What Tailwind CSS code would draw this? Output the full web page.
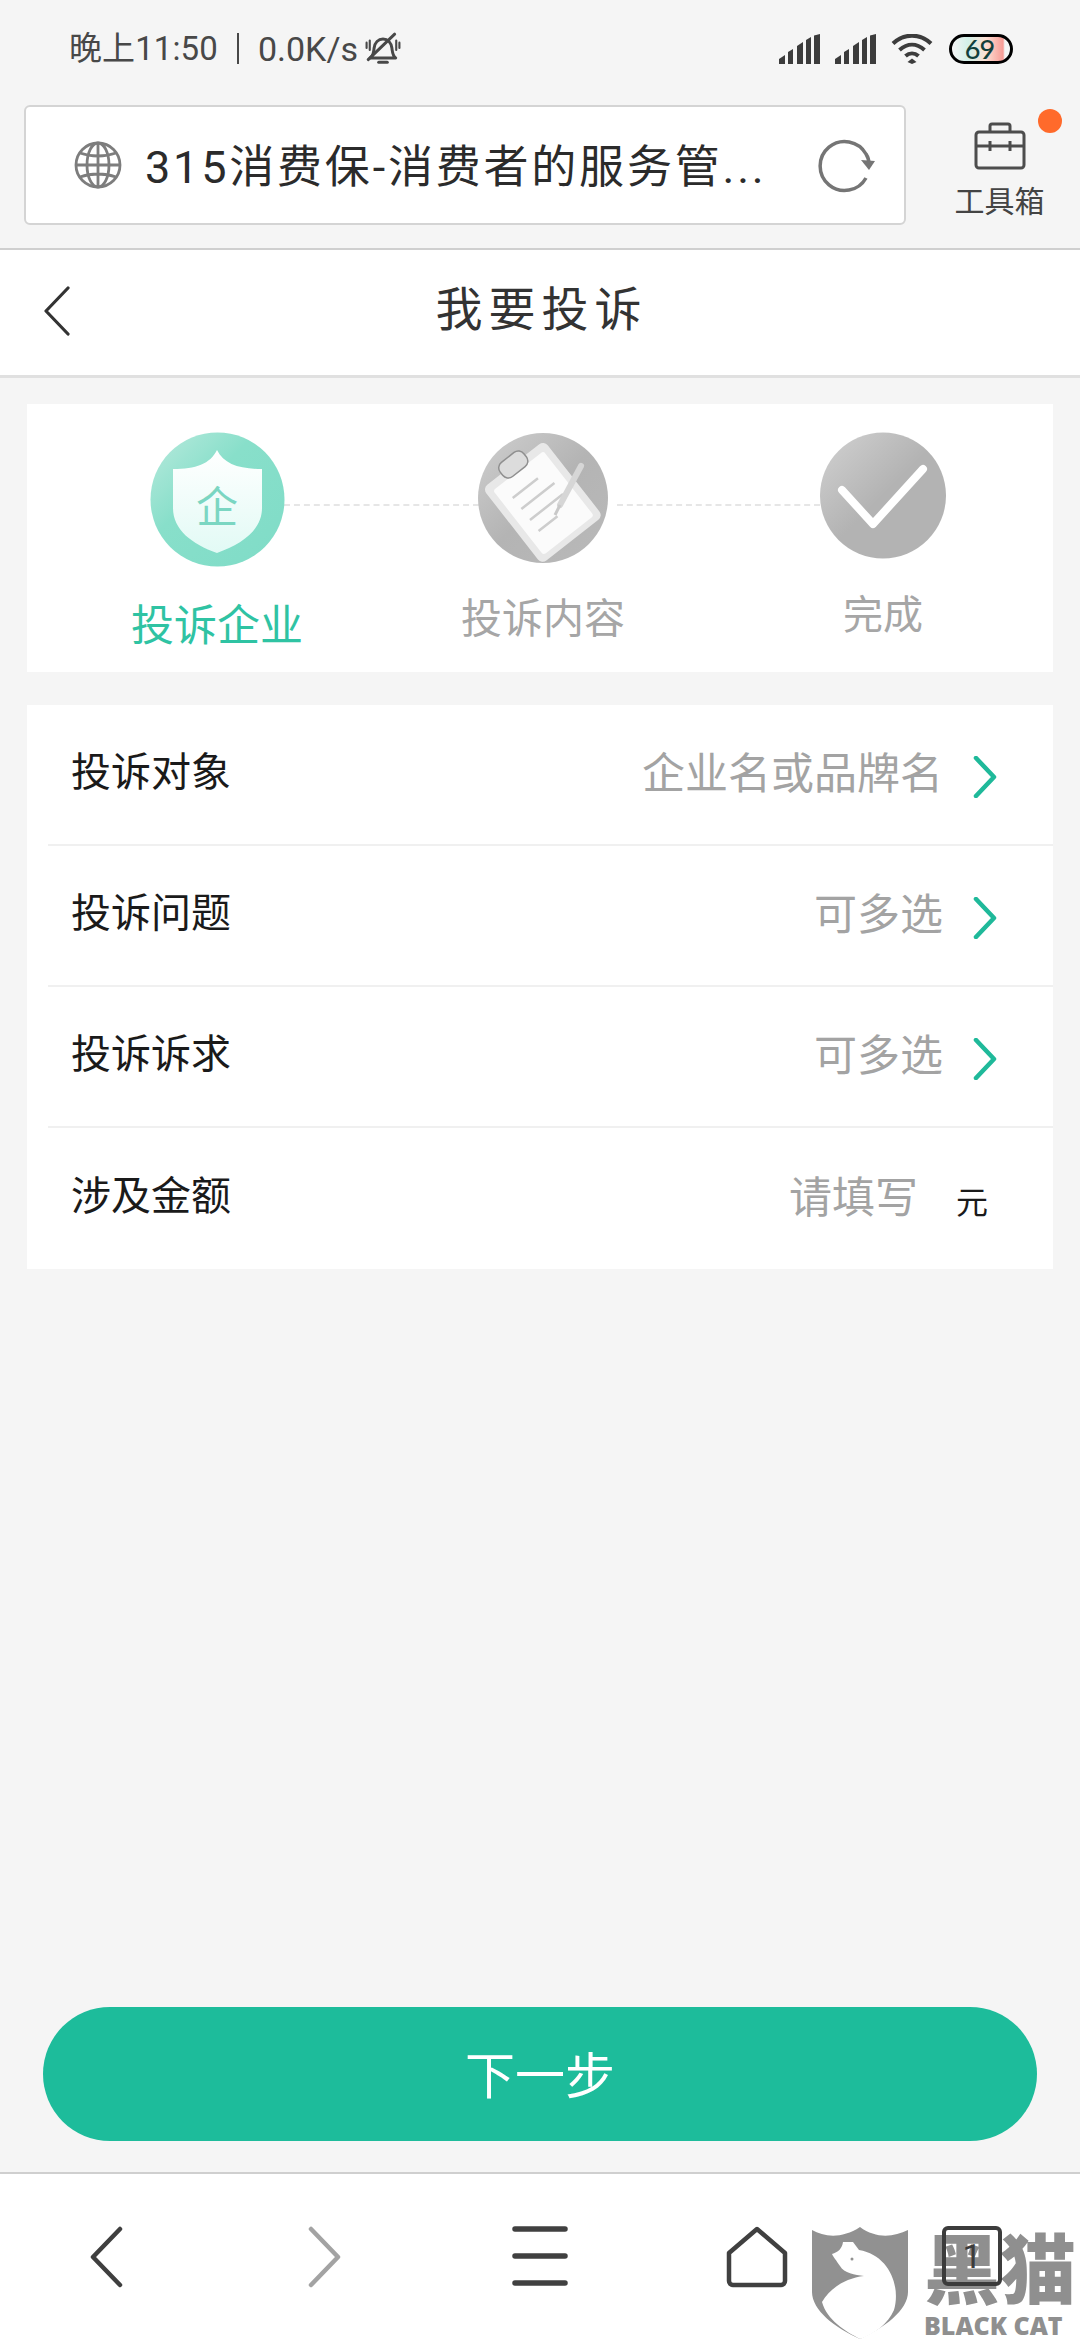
<!DOCTYPE html>
<html lang="zh-CN">
<head>
<meta charset="utf-8">
<script src="https://cdn.jsdelivr.net/npm/@tailwindcss/browser@4"></script>
<title>我要投诉</title>
</head>
<body class="m-0">
<div class="relative w-[1080px] h-[2340px] overflow-hidden flex flex-col bg-[#f5f5f5] font-['Roboto','Noto_Sans_CJK_SC',sans-serif] text-[#333]">

  <!-- status bar -->
  <div class="h-[105px] shrink-0 flex items-center justify-between pl-[69px] pr-[67px] pb-[8px]">
    <div class="flex items-center text-[#484848]">
      <span class="text-[33px] leading-[40px] tracking-[0.1px]">晚上11:50</span>
      <span class="w-[2px] h-[31px] bg-[#484848] ml-[19px]"></span>
      <span class="text-[34px] leading-[40px] ml-[19px] tracking-[0px]">0.0K/s</span>
      <svg class="ml-[7px]" width="36" height="34" viewBox="0 0 34 32" fill="none" stroke="#484848" stroke-width="2.800" stroke-linecap="round" stroke-linejoin="round">
        <path d="M5 24.500c3-2 3-5 3.600-9.500C9.300 10 12.500 6.500 17 6.500s7.700 3.500 8.400 8.500c.6 4.500.6 7.500 3.600 9.500z"/>
        <path d="M13 28.500h8" stroke-width="3"/>
        <path d="M3 26 28 2"/>
        <path d="M1.500 10v5M4.500 8v9M29.500 8v9M32.500 10v5" stroke-width="2"/>
      </svg>
    </div>
    <div class="flex items-center">
      <svg width="41" height="30" viewBox="0 0 41 30" fill="#3c3c3c"><path d="M0 30v-5l6-4v9zM9 30V18l5-3v15zM18 30V12l6-4v22zM27 30V6l5-3v27zM35 30V1.500l6-1.500v30z"/></svg>
      <svg class="ml-[15px]" width="41" height="30" viewBox="0 0 41 30" fill="#3c3c3c"><path d="M0 30v-5l6-4v9zM9 30V18l5-3v15zM18 30V12l6-4v22zM27 30V6l5-3v27zM35 30V1.500l6-1.500v30z"/></svg>
      <svg class="ml-[15px]" width="42" height="30" viewBox="0 0 42 30" fill="none" stroke="#3c3c3c" stroke-width="4"><path d="M2 9.500C13-1 29-1 40 9.500"/><path d="M8.500 16c8-7 17-7 25 0"/><path d="M14.500 22c4-3.500 9-3.500 13 0"/><path d="m21 24.500 4.500 3.500-4.500 2-4.500-2z" fill="#3c3c3c" stroke="none"/></svg>
      <div class="ml-[16px] relative w-[64px] h-[30px] rounded-full border-[3px] border-black bg-[linear-gradient(90deg,#f5f5f5_0%,#d2f0e8_28%,#fde0d4_58%,#f79c96_88%,#f5f5f5_91%)] flex items-center justify-center">
        <span class="text-[27px] leading-[24px] tracking-[-1px] font-medium text-[#123f3c] pr-[3px] font-['Lato',sans-serif]">69</span>
      </div>
    </div>
  </div>

  <!-- address row -->
  <div class="h-[143px] shrink-0 flex items-start pl-[24px]">
    <div class="w-[882px] h-[120px] shrink-0 bg-white border-2 border-[#d4d4d4] rounded-[6px] flex items-center pl-[48px]">
      <svg width="48" height="48" viewBox="0 0 48 48" fill="none" stroke="#7d7d7d" stroke-width="2.800">
        <circle cx="24" cy="24" r="22"/>
        <ellipse cx="24" cy="24" rx="11" ry="22"/>
        <path d="M24 2v44M2 24h44M6 12c11 4 25 4 36 0M6 36c11-4 25-4 36 0"/>
      </svg>
      <span class="ml-[23px] mt-[5px] text-[45px] leading-[56px] text-[#2b2b2b] tracking-[2.800px] whitespace-nowrap">315消费保-消费者的服务管...</span>
      <svg class="ml-[50px] shrink-0" width="60" height="56" viewBox="0 0 60 56" fill="none" stroke="#757575" stroke-width="3.500">
        <path d="M49 41A24.500 24.500 0 1 1 49 17c2 3 3 7 3 10"/>
        <path d="m44 23 14 1-6 9z" fill="#757575" stroke="none"/>
      </svg>
    </div>
    <div class="relative flex-1 flex flex-col items-center pt-[17px] pl-[13px]">
      <svg width="52" height="48" viewBox="0 0 52 48" fill="none" stroke="#4d4d4d" stroke-width="3">
        <rect x="2" y="10" width="48" height="36" rx="3"/>
        <path d="M16 10V4a2 2 0 0 1 2-2h16a2 2 0 0 1 2 2v6"/>
        <path d="M2 24h48M16 19v10M36 19v10"/>
      </svg>
      <span class="mt-[14px] text-[30px] leading-[36px] text-[#444] whitespace-nowrap">工具箱</span>
      <span class="absolute right-[18px] top-[4px] w-[24px] h-[24px] rounded-full bg-[#ff6a2b]"></span>
    </div>
  </div>

  <!-- title bar -->
  <div class="h-[130px] shrink-0 bg-white border-t-2 border-[#cfcfcf] border-b-[3px] border-b-[#e0e0e0] relative flex items-center justify-center">
    <svg class="absolute left-[43px] top-[36px]" width="28" height="50" viewBox="0 0 28 50" fill="none" stroke="#333" stroke-width="3.200" stroke-linecap="round" stroke-linejoin="round"><path d="M25 2 3 25l22 23"/></svg>
    <span class="text-[47px] leading-[60px] tracking-[6px] text-[#333] pl-[3px] mb-[5px]">我要投诉</span>
  </div>

  <!-- steps -->
  <div class="relative mt-[26px] mx-[27px] h-[268px] shrink-0 bg-white flex items-start">
    <span class="absolute left-[257px] top-[100px] w-[195px] border-t-2 border-dashed border-[#e6e6e6]"></span>
    <span class="absolute left-[590px] top-[100px] w-[203px] border-t-2 border-dashed border-[#e6e6e6]"></span>

    <div class="relative ml-[105px] w-[170px] pt-[28px] flex flex-col items-center">
      <svg width="135" height="135" viewBox="0 0 135 135">
        <defs>
          <linearGradient id="tg" x1="0" y1="0" x2="1" y2="1"><stop offset="0" stop-color="#b9eadd"/><stop offset="0.4" stop-color="#88dfca"/><stop offset="1" stop-color="#7fdcc7"/></linearGradient>
          <linearGradient id="sg" x1="0" y1="0" x2="0" y2="1"><stop offset="0" stop-color="#ffffff"/><stop offset="1" stop-color="#e2faf5"/></linearGradient>
        </defs>
        <circle cx="67.500" cy="67.500" r="67" fill="url(#tg)"/>
        <path d="M67 18c7 14 22 19 45 19v39c0 22-20 36-45 45-25-9-44-23-44-45V37c23 0 37-5 44-19z" fill="url(#sg)"/>
        <text x="67" y="90" text-anchor="middle" font-size="42" fill="#7bd6c2" font-family="Noto Sans CJK SC">企</text>
      </svg>
      <span class="mt-[37px] text-[43px] leading-[44px] text-[#2fc3a3] whitespace-nowrap">投诉企业</span>
    </div>

    <div class="relative ml-[159px] w-[164px] pt-[29px] flex flex-col items-center">
      <svg width="130" height="130" viewBox="0 0 130 130">
        <defs>
          <linearGradient id="gg" x1="0" y1="0" x2="1" y2="1"><stop offset="0" stop-color="#cfcfcf"/><stop offset="0.5" stop-color="#b4b4b4"/><stop offset="1" stop-color="#b9b9b9"/></linearGradient>
        </defs>
        <circle cx="65" cy="65" r="65" fill="url(#gg)"/>
        <g transform="rotate(-38 60 68)">
          <rect x="24" y="24" width="78" height="96" rx="6" fill="#e8e8e8"/>
          <rect x="31" y="32" width="64" height="82" rx="3" fill="#fbfbfb"/>
          <rect x="48" y="15" width="30" height="18" rx="7" fill="#dcdcdc" stroke="#8f8f8f" stroke-width="1.500"/>
          <path d="M42 50h32M42 64h42M42 78h42M42 92h24" stroke="#cdcdcd" stroke-width="2.500"/>
        </g>
        <path d="M103 33 82 72" stroke="#d6d6d6" stroke-width="6" stroke-linecap="round"/>
        <path d="m82 72-5 10" stroke="#c8c8c8" stroke-width="3"/>
      </svg>
      <span class="mt-[34px] text-[41px] leading-[44px] text-[#a6a6a6] whitespace-nowrap">投诉内容</span>
    </div>

    <div class="relative ml-[195px] w-[126px] pt-[28px] flex flex-col items-center">
      <svg width="126" height="127" viewBox="0 0 126 127">
        <defs>
          <linearGradient id="gh" x1="0" y1="0" x2="1" y2="1"><stop offset="0" stop-color="#d2d2d2"/><stop offset="0.5" stop-color="#b3b3b3"/><stop offset="1" stop-color="#b3b3b3"/></linearGradient>
        </defs>
        <circle cx="63" cy="63.500" r="63" fill="url(#gh)"/>
        <path d="M22 58 53 92 103 37" fill="none" stroke="#fff" stroke-width="8" stroke-linecap="round" stroke-linejoin="round"/>
      </svg>
      <span class="mt-[35px] text-[40px] leading-[44px] text-[#a6a6a6] whitespace-nowrap">完成</span>
    </div>
  </div>

  <!-- form -->
  <div class="mt-[33px] mx-[27px] shrink-0 bg-white flex flex-col pl-[21px]">
    <div class="h-[141px] border-b-2 border-[#f0f0f0] flex items-center pl-[23px] pr-[56px]">
      <span class="text-[40px] leading-[50px] text-[#1a1a1a] flex-1 mb-[4px]">投诉对象</span>
      <span class="text-[43px] leading-[50px] text-[#a3a3a3] mb-[1px]">企业名或品牌名</span>
      <svg class="ml-[30px] mt-[4px]" width="24" height="42" viewBox="0 0 24 42" fill="none" stroke="#1fb99a" stroke-width="4.500" stroke-linecap="round" stroke-linejoin="round"><path d="M3 2l18 19L3 40"/></svg>
    </div>
    <div class="h-[141px] border-b-2 border-[#f0f0f0] flex items-center pl-[23px] pr-[56px]">
      <span class="text-[40px] leading-[50px] text-[#1a1a1a] flex-1 mb-[4px]">投诉问题</span>
      <span class="text-[43px] leading-[50px] text-[#a3a3a3] mb-[1px]">可多选</span>
      <svg class="ml-[30px] mt-[4px]" width="24" height="42" viewBox="0 0 24 42" fill="none" stroke="#1fb99a" stroke-width="4.500" stroke-linecap="round" stroke-linejoin="round"><path d="M3 2l18 19L3 40"/></svg>
    </div>
    <div class="h-[141px] border-b-2 border-[#f0f0f0] flex items-center pl-[23px] pr-[56px]">
      <span class="text-[40px] leading-[50px] text-[#1a1a1a] flex-1 mb-[4px]">投诉诉求</span>
      <span class="text-[43px] leading-[50px] text-[#a3a3a3] mb-[1px]">可多选</span>
      <svg class="ml-[30px] mt-[4px]" width="24" height="42" viewBox="0 0 24 42" fill="none" stroke="#1fb99a" stroke-width="4.500" stroke-linecap="round" stroke-linejoin="round"><path d="M3 2l18 19L3 40"/></svg>
    </div>
    <div class="h-[141px] flex items-center pl-[23px] pr-[65px]">
      <span class="text-[40px] leading-[50px] text-[#1a1a1a] flex-1 mb-[4px]">涉及金额</span>
      <span class="text-[43px] leading-[50px] text-[#a3a3a3] mb-[1px]">请填写</span>
      <span class="ml-[38px] mt-[8px] text-[32px] leading-[40px] text-[#1a1a1a]">元</span>
    </div>
  </div>

  <!-- next -->
  <div class="mt-auto mx-[43px] mb-[31px] h-[134px] shrink-0 rounded-full bg-[#1dbc9b] flex items-center justify-center">
    <span class="text-[50px] leading-[60px] text-white mt-[5px]">下一步</span>
  </div>

  <!-- bottom nav -->
  <div class="h-[168px] shrink-0 bg-white border-t-2 border-[#cfcfcf] relative flex items-start pt-[52px] pl-[88px]">
    <svg width="36" height="62" viewBox="0 0 36 62" fill="none" stroke="#3f3f3f" stroke-width="4.500" stroke-linecap="round" stroke-linejoin="round"><path d="M32 3 5 31l27 28"/></svg>
    <svg class="ml-[183px]" width="36" height="62" viewBox="0 0 36 62" fill="none" stroke="#a3a3a3" stroke-width="4.500" stroke-linecap="round" stroke-linejoin="round"><path d="m4 3 27 28L4 59"/></svg>
    <svg class="ml-[169px]" width="56" height="62" viewBox="0 0 56 62" fill="none" stroke="#404040" stroke-width="5.500" stroke-linecap="round"><path d="M3 3h50M3 30h50M3 57h50"/></svg>
    <svg class="ml-[158px]" width="62" height="62" viewBox="0 0 62 62" fill="none" stroke="#404040" stroke-width="4.500" stroke-linejoin="round"><path d="M31 3 59 27v28a4 4 0 0 1-4 4H7a4 4 0 0 1-4-4V27z"/></svg>

    <!-- watermark -->
    <div class="absolute left-[811px] top-[52px] w-[269px] h-[112px]">
      <svg class="absolute left-0 top-0" width="98" height="114" viewBox="0 0 98 114">
        <path d="M1 4c12 7 30 9 48-3 16 12 34 10 48 3v62c0 18-24 36-48 47C24 102 1 84 1 66z" fill="#919191"/>
        <path d="M42 16l6 8c30 5 42 36 35 60-6 14-20 24-34 29C34 105 16 94 11 76c8-14 24-24 42-26-9-1-20-3-24-10-4-6-6-8-8-12 6-2 10-5 11-12z" fill="#fff"/>
        <circle cx="41" cy="33" r="1.500" fill="#919191"/>
      </svg>
      <div class="absolute left-[113px] top-[8px] text-[76px] leading-[76px] font-black text-[#8f8f8f] whitespace-nowrap">黑猫</div>
      <div class="absolute left-[113px] top-[88px] font-['Open_Sans',sans-serif] text-[25px] leading-[22px] font-extrabold text-[#8f8f8f] whitespace-nowrap">BLACK CAT</div>
    </div>

    <!-- tabs -->
    <div class="absolute left-[942px] top-[52px] w-[60px] h-[60px] rounded-[6px] border-[4.500px] border-[#3c3c3c] flex items-center justify-center">
      <span class="text-[34px] leading-[36px] text-[#3c3c3c]">1</span>
    </div>
  </div>
</div>
</body>
</html>
